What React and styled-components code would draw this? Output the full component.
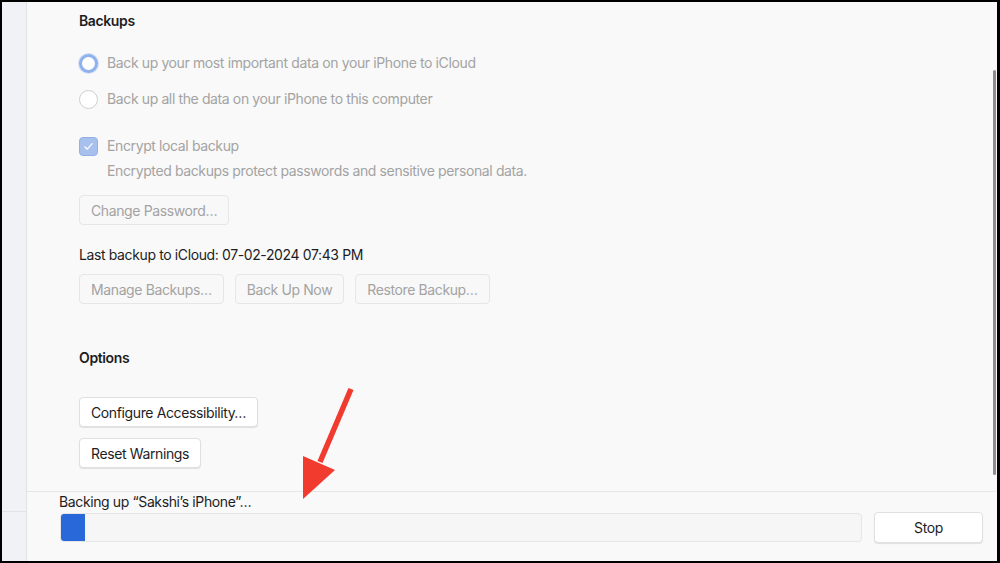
import styled, { createGlobalStyle } from "styled-components"

const GlobalStyle = createGlobalStyle`
    html, body {
        margin: 0;
        padding: 0;
        background: #000;
    }
    * {
        box-sizing: border-box;
    }
`

export default function App() {
    return (
        <>
            <GlobalStyle />
            <Window>
                <Sidebar>
                    <SidebarTop />
                    <SidebarBottom />
                </Sidebar>
                <Main>
                    <Content>
                        <Heading>Backups</Heading>

                        <ChoiceRow $mt={24}>
                            <Radio $active />
                            <DimLabel>
                                Back up your most important data on your iPhone
                                to iCloud
                            </DimLabel>
                        </ChoiceRow>
                        <ChoiceRow $mt={18}>
                            <Radio />
                            <DimLabel>
                                Back up all the data on your iPhone to this
                                computer
                            </DimLabel>
                        </ChoiceRow>

                        <ChoiceRow $mt={29}>
                            <Checkbox>
                                <svg width="13" height="13" viewBox="0 0 13 13">
                                    <path
                                        d="M2.8 6.8 L5.3 9.2 L10.2 3.6"
                                        fill="none"
                                        stroke="#fff"
                                        strokeWidth="1.2"
                                        strokeLinecap="round"
                                        strokeLinejoin="round"
                                    />
                                </svg>
                            </Checkbox>
                            <DimLabel>Encrypt local backup</DimLabel>
                        </ChoiceRow>
                        <Hint>
                            Encrypted backups protect passwords and sensitive
                            personal data.
                        </Hint>

                        <ButtonRow $mt={15}>
                            <Button disabled>Change Password…</Button>
                        </ButtonRow>

                        <Status>Last backup to iCloud: 07-02-2024 07:43 PM</Status>

                        <ButtonRow $mt={10}>
                            <Button disabled>Manage Backups…</Button>
                            <Button disabled>Back Up Now</Button>
                            <Button disabled>Restore Backup…</Button>
                        </ButtonRow>

                        <Heading $mt={45}>Options</Heading>

                        <ButtonRow $mt={30}>
                            <Button>Configure Accessibility…</Button>
                        </ButtonRow>
                        <ButtonRow $mt={11}>
                            <Button>Reset Warnings</Button>
                        </ButtonRow>

                        <Scrollbar />
                    </Content>

                    <Footer>
                        <FooterText>Backing up “Sakshi’s iPhone”…</FooterText>
                        <ProgressRow>
                            <Track>
                                <Fill style={{ width: "3%" }} />
                            </Track>
                            <StopButton>Stop</StopButton>
                        </ProgressRow>
                    </Footer>
                </Main>

                <Arrow viewBox="0 0 1000 563" width="1000" height="563">
                    <line
                        x1="351"
                        y1="389"
                        x2="320"
                        y2="462"
                        stroke="#f23b2f"
                        strokeWidth="5.5"
                    />
                    <polygon points="303,456 335,470 303,499" fill="#f23b2f" />
                </Arrow>
            </Window>
        </>
    )
}

// style CSS

const Window = styled.div`
    position: relative;
    display: flex;
    width: 1000px;
    height: 563px;
    border-style: solid;
    border-color: #000;
    border-width: 2px 3px 2px 2px;
    background: #f9f9f9;
    font-family: Inter, "Liberation Sans", sans-serif;
    font-size: 14px;
    letter-spacing: -0.38px;
    overflow: hidden;
`

const Sidebar = styled.div`
    width: 25px;
    display: flex;
    flex-direction: column;
    background: #f1f2f6;
    border-right: 1px solid #e2e3e7;
`

const SidebarTop = styled.div`
    flex: 1;
`

const SidebarBottom = styled.div`
    height: 50px;
    border-top: 1px solid #e2e3e7;
`

const Main = styled.div`
    flex: 1;
    display: flex;
    flex-direction: column;
    min-width: 0;
`

const Content = styled.div`
    position: relative;
    flex: 1;
    display: flex;
    flex-direction: column;
    align-items: flex-start;
    padding: 10px 0 0 52px;
    overflow: hidden;
`

const Heading = styled.div`
    margin-top: ${(p) => p.$mt || 0}px;
    line-height: 18px;
    font-weight: 600;
    color: #1d1d1f;
`

const ChoiceRow = styled.div`
    display: flex;
    align-items: center;
    gap: 9px;
    height: 18px;
    margin-top: ${(p) => p.$mt || 0}px;
`

const DimLabel = styled.span`
    line-height: 18px;
    color: #a3a3a3;
`

const Radio = styled.span`
    width: 19px;
    height: 19px;
    border-radius: 50%;
    background: #fff;
    border: ${(p) => (p.$active ? "3px solid #8fb1ec" : "1px solid #cfcfcf")};
    box-shadow: ${(p) =>
        p.$active ? "0 0 0 1px rgba(143, 177, 236, 0.35)" : "none"};
`

const Checkbox = styled.span`
    width: 19px;
    height: 19px;
    display: flex;
    align-items: center;
    justify-content: center;
    border-radius: 4px;
    background: #a8c0ee;
    border: 1px solid #93b0e6;
`

const Hint = styled.div`
    margin-top: 7px;
    padding-left: 28px;
    line-height: 18px;
    color: #a3a3a3;
`

const Status = styled.div`
    margin-top: 21px;
    line-height: 18px;
    color: #1d1d1f;
`

const ButtonRow = styled.div`
    display: flex;
    gap: 11px;
    margin-top: ${(p) => p.$mt || 0}px;
`

const Button = styled.button`
    height: 30px;
    padding: 0 11px;
    font-family: inherit;
    font-size: 14px;
    letter-spacing: inherit;
    border-radius: 4px;
    background: #fff;
    color: #1d1d1f;
    border: 1px solid #e0e0e0;
    box-shadow: 0 1px 1px rgba(0, 0, 0, 0.1);
    &:disabled {
        background: #f8f8f8;
        color: #a3a3a3;
        border-color: #e6e6e6;
        box-shadow: none;
    }
`

const Scrollbar = styled.div`
    position: absolute;
    right: 1px;
    top: 68px;
    width: 3px;
    height: 405px;
    background: #8d8d8d;
    border-radius: 2px;
`

const Footer = styled.div`
    height: 70px;
    border-top: 1px solid #e6e6e6;
    padding: 1px 13px 0 32px;
    margin-right: 1px;
`

const FooterText = styled.div`
    line-height: 18px;
    color: #1d1d1f;
`

const ProgressRow = styled.div`
    display: flex;
    align-items: center;
    gap: 12px;
    margin-top: 1px;
`

const Track = styled.div`
    flex: 1;
    height: 29px;
    margin-left: 1px;
    background: #f6f6f6;
    border: 1px solid #e5e5e5;
    border-radius: 4px;
    overflow: hidden;
`

const Fill = styled.div`
    height: 100%;
    background: #2968d8;
`

const StopButton = styled(Button)`
    width: 109px;
    height: 31px;
`

const Arrow = styled.svg`
    position: absolute;
    left: -2px;
    top: -2px;
    pointer-events: none;
`
